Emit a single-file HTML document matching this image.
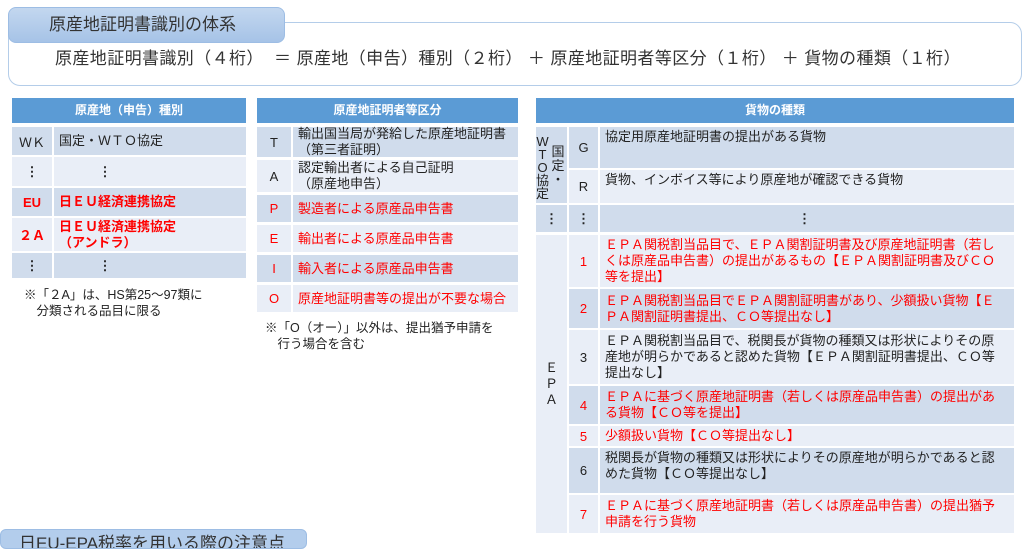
<!DOCTYPE html>
<html><head><meta charset="utf-8"><style>
*{margin:0;padding:0;box-sizing:border-box}
body{width:1024px;height:537px;overflow:hidden;background:#fff;position:relative;font-family:"Liberation Sans","Noto Sans CJK JP",sans-serif;color:#222}
.a{position:absolute}
.h{background:#5b9bd5;color:#fff;font-weight:bold;font-size:12px;text-align:center;line-height:25px}
.d{background:#d0dcec}.l{background:#e9eef7}
.c{display:flex;align-items:center;justify-content:center;font-size:13px}
.t{display:flex;align-items:center;font-size:13px;line-height:16px;padding-left:5px}
.w{padding-right:12px}
.r{color:#f00}
.b{font-weight:bold}
.tp{align-items:flex-start;padding-top:2px}
</style></head><body>
<div class="a" style="left:8px;top:22px;width:1014px;height:64px;border:1.5px solid #b4cde9;border-radius:12px"></div>
<div class="a" style="left:8px;top:7px;width:277px;height:36px;border:1px solid #9dbde4;border-radius:8px;background:linear-gradient(#c3d7ef,#a6c3e7);font-size:17px;line-height:34px;padding-left:40px;color:#333">原産地証明書識別の体系</div>
<div class="a" style="left:55px;top:47px;font-size:17px;line-height:24px;white-space:pre;color:#333;letter-spacing:0.4px">原産地証明書識別（４桁）  ＝ 原産地（申告）種別（２桁） ＋ 原産地証明者等区分（１桁） ＋ 貨物の種類（１桁）</div>

<!-- table1 -->
<div class="a h" style="left:12px;top:98px;width:234px;height:25px">原産地（申告）種別</div>
<div class="a d c" style="left:12px;top:127px;width:40px;height:28px">ＷＫ</div>
<div class="a d t" style="left:54px;top:127px;width:192px;height:28px">国定・ＷＴＯ協定</div>
<div class="a l c b" style="left:12px;top:157px;width:40px;height:29px">⋮</div>
<div class="a l c b" style="left:54px;top:157px;width:192px;height:29px;padding-right:90px">⋮</div>
<div class="a d c r b" style="left:12px;top:188px;width:40px;height:28px">EU</div>
<div class="a d t r b" style="left:54px;top:188px;width:192px;height:28px">日ＥＵ経済連携協定</div>
<div class="a l c r b" style="left:12px;top:218px;width:40px;height:33px">２Ａ</div>
<div class="a l t r b" style="left:54px;top:218px;width:192px;height:33px">日ＥＵ経済連携協定<br>（アンドラ）</div>
<div class="a d c b" style="left:12px;top:253px;width:40px;height:25px">⋮</div>
<div class="a d c b" style="left:54px;top:253px;width:192px;height:25px;padding-right:90px">⋮</div>
<div class="a" style="left:24px;top:287px;font-size:12.5px;line-height:16px">※「２A」は、HS第25～97類に<br>　分類される品目に限る</div>

<!-- table2 -->
<div class="a h" style="left:257px;top:98px;width:261px;height:25px">原産地証明者等区分</div>
<div class="a d c" style="left:257px;top:127px;width:34px;height:30px">T</div>
<div class="a d t" style="left:293px;top:127px;width:225px;height:30px">輸出国当局が発給した原産地証明書<br>（第三者証明）</div>
<div class="a l c" style="left:257px;top:160px;width:34px;height:32px">A</div>
<div class="a l t" style="left:293px;top:160px;width:225px;height:32px">認定輸出者による自己証明<br>（原産地申告）</div>
<div class="a d c r" style="left:257px;top:195px;width:34px;height:27px">P</div>
<div class="a d t r" style="left:293px;top:195px;width:225px;height:27px">製造者による原産品申告書</div>
<div class="a l c r" style="left:257px;top:225px;width:34px;height:27px">E</div>
<div class="a l t r" style="left:293px;top:225px;width:225px;height:27px">輸出者による原産品申告書</div>
<div class="a d c r" style="left:257px;top:255px;width:34px;height:27px">I</div>
<div class="a d t r" style="left:293px;top:255px;width:225px;height:27px">輸入者による原産品申告書</div>
<div class="a l c r" style="left:257px;top:285px;width:34px;height:27px">O</div>
<div class="a l t r" style="left:293px;top:285px;width:225px;height:27px">原産地証明書等の提出が不要な場合</div>
<div class="a" style="left:265px;top:320px;font-size:12.5px;line-height:16px">※「O（オー）」以外は、提出猶予申請を<br>　行う場合を含む</div>

<!-- table3 -->
<div class="a h" style="left:536px;top:98px;width:478px;height:25px">貨物の種類</div>
<div class="a d" style="left:536px;top:127px;width:31px;height:76px;font-size:13px;line-height:13px">
 <div class="a" style="left:0px;top:8px;width:13px;text-align:center">W<br>T<br>O<br>協<br>定</div>
 <div class="a" style="left:15px;top:18px;width:14px;text-align:center;line-height:14px">国<br>定<br>・</div>
</div>
<div class="a d c" style="left:569px;top:127px;width:29px;height:41px">G</div>
<div class="a d t tp w" style="left:600px;top:127px;width:414px;height:41px">協定用原産地証明書の提出がある貨物</div>
<div class="a l c" style="left:569px;top:170px;width:29px;height:33px">R</div>
<div class="a l t tp w" style="left:600px;top:170px;width:414px;height:33px">貨物、インボイス等により原産地が確認できる貨物</div>
<div class="a d c b" style="left:536px;top:205px;width:31px;height:27px">⋮</div>
<div class="a d c b" style="left:569px;top:205px;width:29px;height:27px">⋮</div>
<div class="a d c b" style="left:600px;top:205px;width:414px;height:27px;padding-right:5px">⋮</div>
<div class="a l c" style="left:536px;top:235px;width:31px;height:298px;font-size:13px;line-height:16px;text-align:center">Ｅ<br>Ｐ<br>Ａ</div>
<div class="a l c r" style="left:569px;top:235px;width:29px;height:52px">1</div>
<div class="a l t r w" style="left:600px;top:235px;width:414px;height:52px">ＥＰＡ関税割当品目で、ＥＰＡ関割証明書及び原産地証明書（若しくは原産品申告書）の提出があるもの【ＥＰＡ関割証明書及びＣＯ等を提出】</div>
<div class="a d c r" style="left:569px;top:289px;width:29px;height:39px">2</div>
<div class="a d t r w" style="left:600px;top:289px;width:414px;height:39px">ＥＰＡ関税割当品目でＥＰＡ関割証明書があり、少額扱い貨物【ＥＰＡ関割証明書提出、ＣＯ等提出なし】</div>
<div class="a l c" style="left:569px;top:330px;width:29px;height:54px">3</div>
<div class="a l t w" style="left:600px;top:330px;width:414px;height:54px">ＥＰＡ関税割当品目で、税関長が貨物の種類又は形状によりその原産地が明らかであると認めた貨物【ＥＰＡ関割証明書提出、ＣＯ等提出なし】</div>
<div class="a d c r" style="left:569px;top:386px;width:29px;height:38px">4</div>
<div class="a d t r w" style="left:600px;top:386px;width:414px;height:38px">ＥＰＡに基づく原産地証明書（若しくは原産品申告書）の提出がある貨物【ＣＯ等を提出】</div>
<div class="a l c r" style="left:569px;top:426px;width:29px;height:20px">5</div>
<div class="a l t r w" style="left:600px;top:426px;width:414px;height:20px">少額扱い貨物【ＣＯ等提出なし】</div>
<div class="a d c" style="left:569px;top:448px;width:29px;height:45px">6</div>
<div class="a d t tp w" style="left:600px;top:448px;width:414px;height:45px">税関長が貨物の種類又は形状によりその原産地が明らかであると認めた貨物【ＣＯ等提出なし】</div>
<div class="a l c r" style="left:569px;top:495px;width:29px;height:38px">7</div>
<div class="a l t r w" style="left:600px;top:495px;width:414px;height:38px">ＥＰＡに基づく原産地証明書（若しくは原産品申告書）の提出猶予申請を行う貨物</div>

<div class="a" style="left:0;top:529px;width:307px;height:20px;border:1px solid #9dbde4;border-radius:6px;background:#b3cdec;font-size:17px;line-height:22px;padding-top:3px;padding-left:18px;color:#333;overflow:hidden">日EU-EPA税率を用いる際の注意点</div>
</body></html>
